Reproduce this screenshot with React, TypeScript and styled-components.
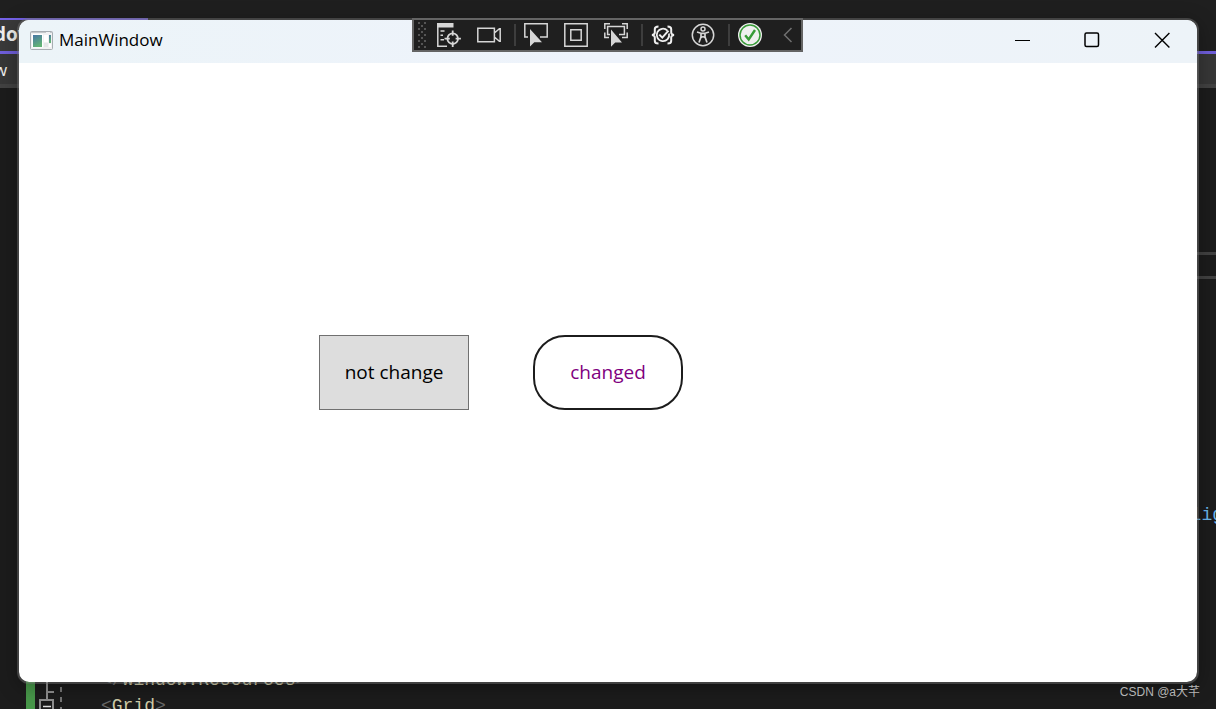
import React from 'react';
import styled, { createGlobalStyle } from 'styled-components';

const GlobalStyle = createGlobalStyle`
  *, *::before, *::after { box-sizing: border-box; }
  body { margin: 0; background: #1c1c1c; font-family: "Open Sans", sans-serif; }
  button { font: inherit; color: inherit; margin: 0; padding: 0; border: 0; background: none; }
  svg { display: block; }
`;

const Desktop = styled.div`
  position: relative;
  display: grid;
  grid-template: minmax(0, 1fr) / minmax(0, 1fr);
  min-height: 100vh;
  overflow: hidden;
  background: #1c1c1c;
`;

/* ---------- editor behind the window ---------- */

const Editor = styled.div`
  grid-area: 1 / 1;
  display: flex;
  flex-direction: column;
  min-height: 0;
  overflow: hidden;
  color: #f0f0f0;
`;

const TabStrip = styled.div`
  display: flex;
  padding-top: 18px;
  height: 54px;
  background: #1f1f1f;
  border-bottom: 3px solid #705fdc;
`;

const Tab = styled.div`
  width: 148px;
  border-top: 2px solid #7562e8;
  background: #3a3a3a;
  font-size: 19px;
  font-weight: 700;
  line-height: 28px;
  text-indent: -6px;
`;

const NavBar = styled.div`
  height: 34px;
  background: #373737;
  border-bottom: 4px solid #424242;
  font-size: 17px;
  line-height: 32px;
  text-indent: -6px;
`;

const Code = styled.div`
  flex: 1;
  display: flex;
  flex-direction: column;
  padding-top: 164px;
  font-family: "Liberation Mono", monospace;
  font-size: 18px;
  line-height: 26px;
`;

const CurrentLine = styled.div`
  height: 27px;
  margin-left: 101px;
  border: solid #424242;
  border-width: 3px 0;
`;

const Attribute = styled.div`
  display: flex;
  justify-content: flex-end;
  margin: 223px -7px 0 0;
  color: #6cb8ee;
`;

const CodeTail = styled.div`
  display: flex;
  margin-top: auto;
  margin-bottom: -10px;
  padding-left: 26px;
`;

const ChangeBar = styled.div`
  width: 9px;
  background: #48984a;
`;

const Fold = styled.svg`
  width: 66px;
  height: 52px;
`;

const CodeLine = styled.div`
  color: #686868;
`;

const TagName = styled.span`
  color: #d0cda8;
`;

/* ---------- application window ---------- */

const Window = styled.main`
  grid-area: 1 / 1;
  position: relative;
  display: flex;
  flex-direction: column;
  margin: 18px 17px 25px;
  border: 2px solid rgba(116, 116, 116, 0.45);
  border-radius: 12px;
  background: #fff;
  background-clip: padding-box;
  box-shadow: 0 4px 20px rgba(0, 0, 0, 0.3);
`;

const TitleBar = styled.header`
  display: flex;
  align-items: center;
  height: 43px;
  padding: 0 0 3px 11px;
  border-radius: 10px 10px 0 0;
  background: linear-gradient(90deg, #ecf4f8, #eef3fb 50%, #edf3f8);
`;

const Title = styled.h1`
  flex: 1;
  margin: 0 0 0 6px;
  color: #000;
  font-size: 17px;
  font-weight: 400;
  line-height: 24px;
`;

const Caption = styled.button`
  display: grid;
  place-items: center;
  width: 70px;
  height: 40px;
`;

const DebugBar = styled.div`
  position: absolute;
  top: -2px;
  left: 0;
  right: 1px;
  display: flex;
  width: 391px;
  height: 34px;
  margin: 0 auto;
  border: 2px solid #646464;
  background: #1f1f1f;
  color: #d6d6d6;
`;

const Grip = styled.svg`
  width: 15px;
  height: 30px;
`;

const Tool = styled.button`
  display: grid;
  place-items: center;
  width: 40px;
  height: 30px;
`;

const Collapse = styled(Tool)`
  flex: 1;
  padding-left: 4px;
  color: #707070;
`;

const Separator = styled.span`
  width: 7px;
  margin: 4px 0;
  border-right: 2px solid #3d3d3d;
`;

const Content = styled.section`
  flex: 1;
  display: flex;
  align-items: flex-start;
  gap: 64px;
  padding: 272px 300px 0;
`;

const DemoButton = styled.button<{ $rounded?: boolean }>`
  && {
    width: 150px;
    height: 75px;
    padding-bottom: 2px;
    border: ${p => (p.$rounded ? '2px solid #1c1c1c' : '1px solid #707070')};
    border-radius: ${p => (p.$rounded ? '32px' : '0')};
    background: ${p => (p.$rounded ? '#fff' : '#ddd')};
    color: ${p => (p.$rounded ? '#800080' : '#000')};
    font-size: 19px;
    line-height: 26px;
  }
`;

const Watermark = styled.div`
  position: absolute;
  right: 16px;
  bottom: 8px;
  color: #b4b4b4;
  font-family: "Liberation Sans", "Noto Sans CJK SC", sans-serif;
  font-size: 12px;
  line-height: 18px;
`;

/* ---------- icons ---------- */

const Icon = ({ children }: { children: React.ReactNode }) => (
  <svg width="24" height="24" viewBox="0 0 24 24" fill="none" stroke="currentColor" strokeWidth="1.5" aria-hidden="true">
    {children}
  </svg>
);

const cursor = 'M6 6v17.5l4.3-4.3H18z';

const tools: { label: string; icon: React.ReactNode; split?: boolean }[] = [
  {
    label: 'Go to Live Visual Tree',
    icon: (
      <>
        <path d="M0 0h16.5v4.5H0z" fill="currentColor" stroke="none" />
        <path d="M.8 4v19.2H10M3.5 8h4M3.5 12.3h2.5M3.5 16.7h3.5" />
        <circle cx="15.7" cy="15.7" r="5.3" strokeWidth="1.8" />
        <path d="M15.7 7.5v5.3M15.7 18.6v5.3M7.5 15.7h5.3M18.6 15.7h5.3" strokeWidth="1.8" />
      </>
    ),
  },
  { label: 'Show in XAML Live Preview', split: true, icon: <path d="M.8 5.2h16.6v13.6H.8zM17.4 10l5-4.3h.8v12.6h-.8l-5-4.3" /> },
  {
    label: 'Select Element',
    icon: (
      <>
        <path d="M4 14H.8V.8h22.4V14H16" />
        <path d={cursor} fill="currentColor" stroke="none" />
      </>
    ),
  },
  { label: 'Display Layout Adorners', icon: <path d="M.8.8h22.4v22.4H.8zM6.8 6.8h10.4v10.4H6.8z" /> },
  {
    label: 'Track Focused Element',
    split: true,
    icon: (
      <>
        <path d="M.8 6V.8H6M18 .8h5.2V6M23.2 9.5v5H18M.8 9.5v5H5M6 11.5H3.6V3.6h16.8v7.9H15" />
        <path d="M7 6.5v17.2l4.2-4.3h6.8z" fill="currentColor" stroke="none" />
      </>
    ),
  },
  {
    label: 'Hot Reload',
    icon: (
      <g stroke="#f0f0f0">
        <path d="M7.5 3.4Q3.8 3.4 3.8 6v3.5Q3.8 11.6 1 12q2.8.4 2.8 2.5V18q0 2.6 3.7 2.6M16.5 3.4q3.7 0 3.7 2.6v3.5q0 2.1 2.8 2.5-2.8.4-2.8 2.5V18q0 2.6-3.7 2.6" strokeWidth="2" />
        <path d="M16.4 7.6A6.2 6.2 0 1 0 18 10.5" strokeWidth="1.8" />
        <path d="M8.3 11.6l3 3 6.2-7" strokeWidth="2" />
      </g>
    ),
  },
  {
    label: 'Accessibility Checker',
    split: true,
    icon: (
      <>
        <circle cx="12" cy="12" r="10.7" />
        <circle cx="12" cy="5.9" r="2" />
        <path d="M6 9l4 1.3v3.6L8 19.5M18 9l-4 1.3v3.6l2 5.6M10 10.3h4M10 14.6l2-1 2 1" strokeWidth="1.7" />
      </>
    ),
  },
  {
    label: 'No Binding Failures',
    icon: (
      <>
        <circle cx="12" cy="12" r="12" fill="#f0f0f0" stroke="none" />
        <circle cx="12" cy="12" r="10" stroke="#389b38" />
        <path d="M7.2 12.2l3.5 4.3L17 7" stroke="#389b38" strokeWidth="2.4" />
      </>
    ),
  },
];

const AppIcon = () => (
  <svg width="23" height="19" viewBox="0 0 23 19" aria-hidden="true">
    <defs>
      <linearGradient id="pane" x1="0" y1="0" x2="0.4" y2="1">
        <stop offset="0" stopColor="#4776a6" />
        <stop offset="1" stopColor="#62b276" />
      </linearGradient>
    </defs>
    <rect x=".5" y=".5" width="22" height="18" rx="1" fill="#f1f2f3" stroke="#a7adb2" />
    <path d="M1 1.5h21" stroke="#c4c8cb" />
    <path d="M16 1.5h4" stroke="#f1f2f3" />
    <rect x="2" y="3" width="11" height="13.5" fill="#fff" />
    <rect x="3" y="4" width="9" height="12" fill="url(#pane)" />
    <rect x="14" y="4" width="4" height="7" fill="#fff" />
    <rect x="14" y="12" width="4" height="4" fill="#e4e6e8" />
    <rect x="19" y="4" width="2" height="8" fill="url(#pane)" />
    <rect x="19" y="13" width="2" height="3" fill="#fff" />
  </svg>
);

export default function App() {
  return (
    <Desktop>
      <GlobalStyle />
      <Editor>
        <TabStrip>
          <Tab>dow</Tab>
        </TabStrip>
        <NavBar>w</NavBar>
        <Code>
          <CurrentLine />
          <Attribute>lig</Attribute>
          <CodeTail>
            <ChangeBar />
            <Fold viewBox="0 0 66 52" fill="none" stroke="#909090" aria-hidden="true">
              <path d="M12 0v32M12 25h7" strokeWidth="2" />
              <rect x="5" y="33" width="13" height="13" strokeWidth="2" />
              <path d="M8 39.5h8" stroke="#ddd" strokeWidth="1.5" />
              <path d="M26 0v52" strokeWidth="2" strokeDasharray="5 5" stroke="#777" />
            </Fold>
            <div>
              <CodeLine>&lt;/<TagName>Window.Resources</TagName>&gt;</CodeLine>
              <CodeLine>&lt;<TagName>Grid</TagName>&gt;</CodeLine>
            </div>
          </CodeTail>
        </Code>
      </Editor>

      <Window>
        <TitleBar>
          <AppIcon />
          <Title>MainWindow</Title>
          <Caption aria-label="Minimize">
            <svg width="16" height="16" viewBox="0 0 16 16" stroke="#000"><path d="M1 8.5h15" /></svg>
          </Caption>
          <Caption aria-label="Maximize">
            <svg width="16" height="16" viewBox="0 0 16 16" fill="none" stroke="#000" strokeWidth="1.5"><rect x="1" y="1" width="13.5" height="13.5" rx="1.5" /></svg>
          </Caption>
          <Caption aria-label="Close">
            <svg width="16" height="16" viewBox="0 0 16 16" stroke="#000" strokeWidth="1.4"><path d="M1 1l14.4 14.4M15.4 1L1 15.4" /></svg>
          </Caption>
        </TitleBar>

        <DebugBar role="toolbar" aria-label="Debug tools">
          <Grip viewBox="0 0 15 30" fill="#555" aria-hidden="true">
            {[0, 1, 2, 3, 4].map(i => (
              <g key={i}>
                <path d={`M4 ${2 + i * 6}h2v2h-2zM10 ${2 + i * 6}h2v2h-2z`} />
                {i < 4 && <path d={`M7 ${5 + i * 6}h2v2h-2z`} />}
              </g>
            ))}
          </Grip>
          {tools.map(t => (
            <React.Fragment key={t.label}>
              <Tool aria-label={t.label}><Icon>{t.icon}</Icon></Tool>
              {t.split && <Separator />}
            </React.Fragment>
          ))}
          <Collapse aria-label="Collapse">
            <svg width="10" height="16" viewBox="0 0 10 16" fill="none" stroke="currentColor" strokeWidth="1.5"><path d="M8.5 1L1.5 8l7 7" /></svg>
          </Collapse>
        </DebugBar>

        <Content>
          <DemoButton>not change</DemoButton>
          <DemoButton $rounded>changed</DemoButton>
        </Content>
      </Window>

      <Watermark>CSDN @a大芊</Watermark>
    </Desktop>
  );
}
